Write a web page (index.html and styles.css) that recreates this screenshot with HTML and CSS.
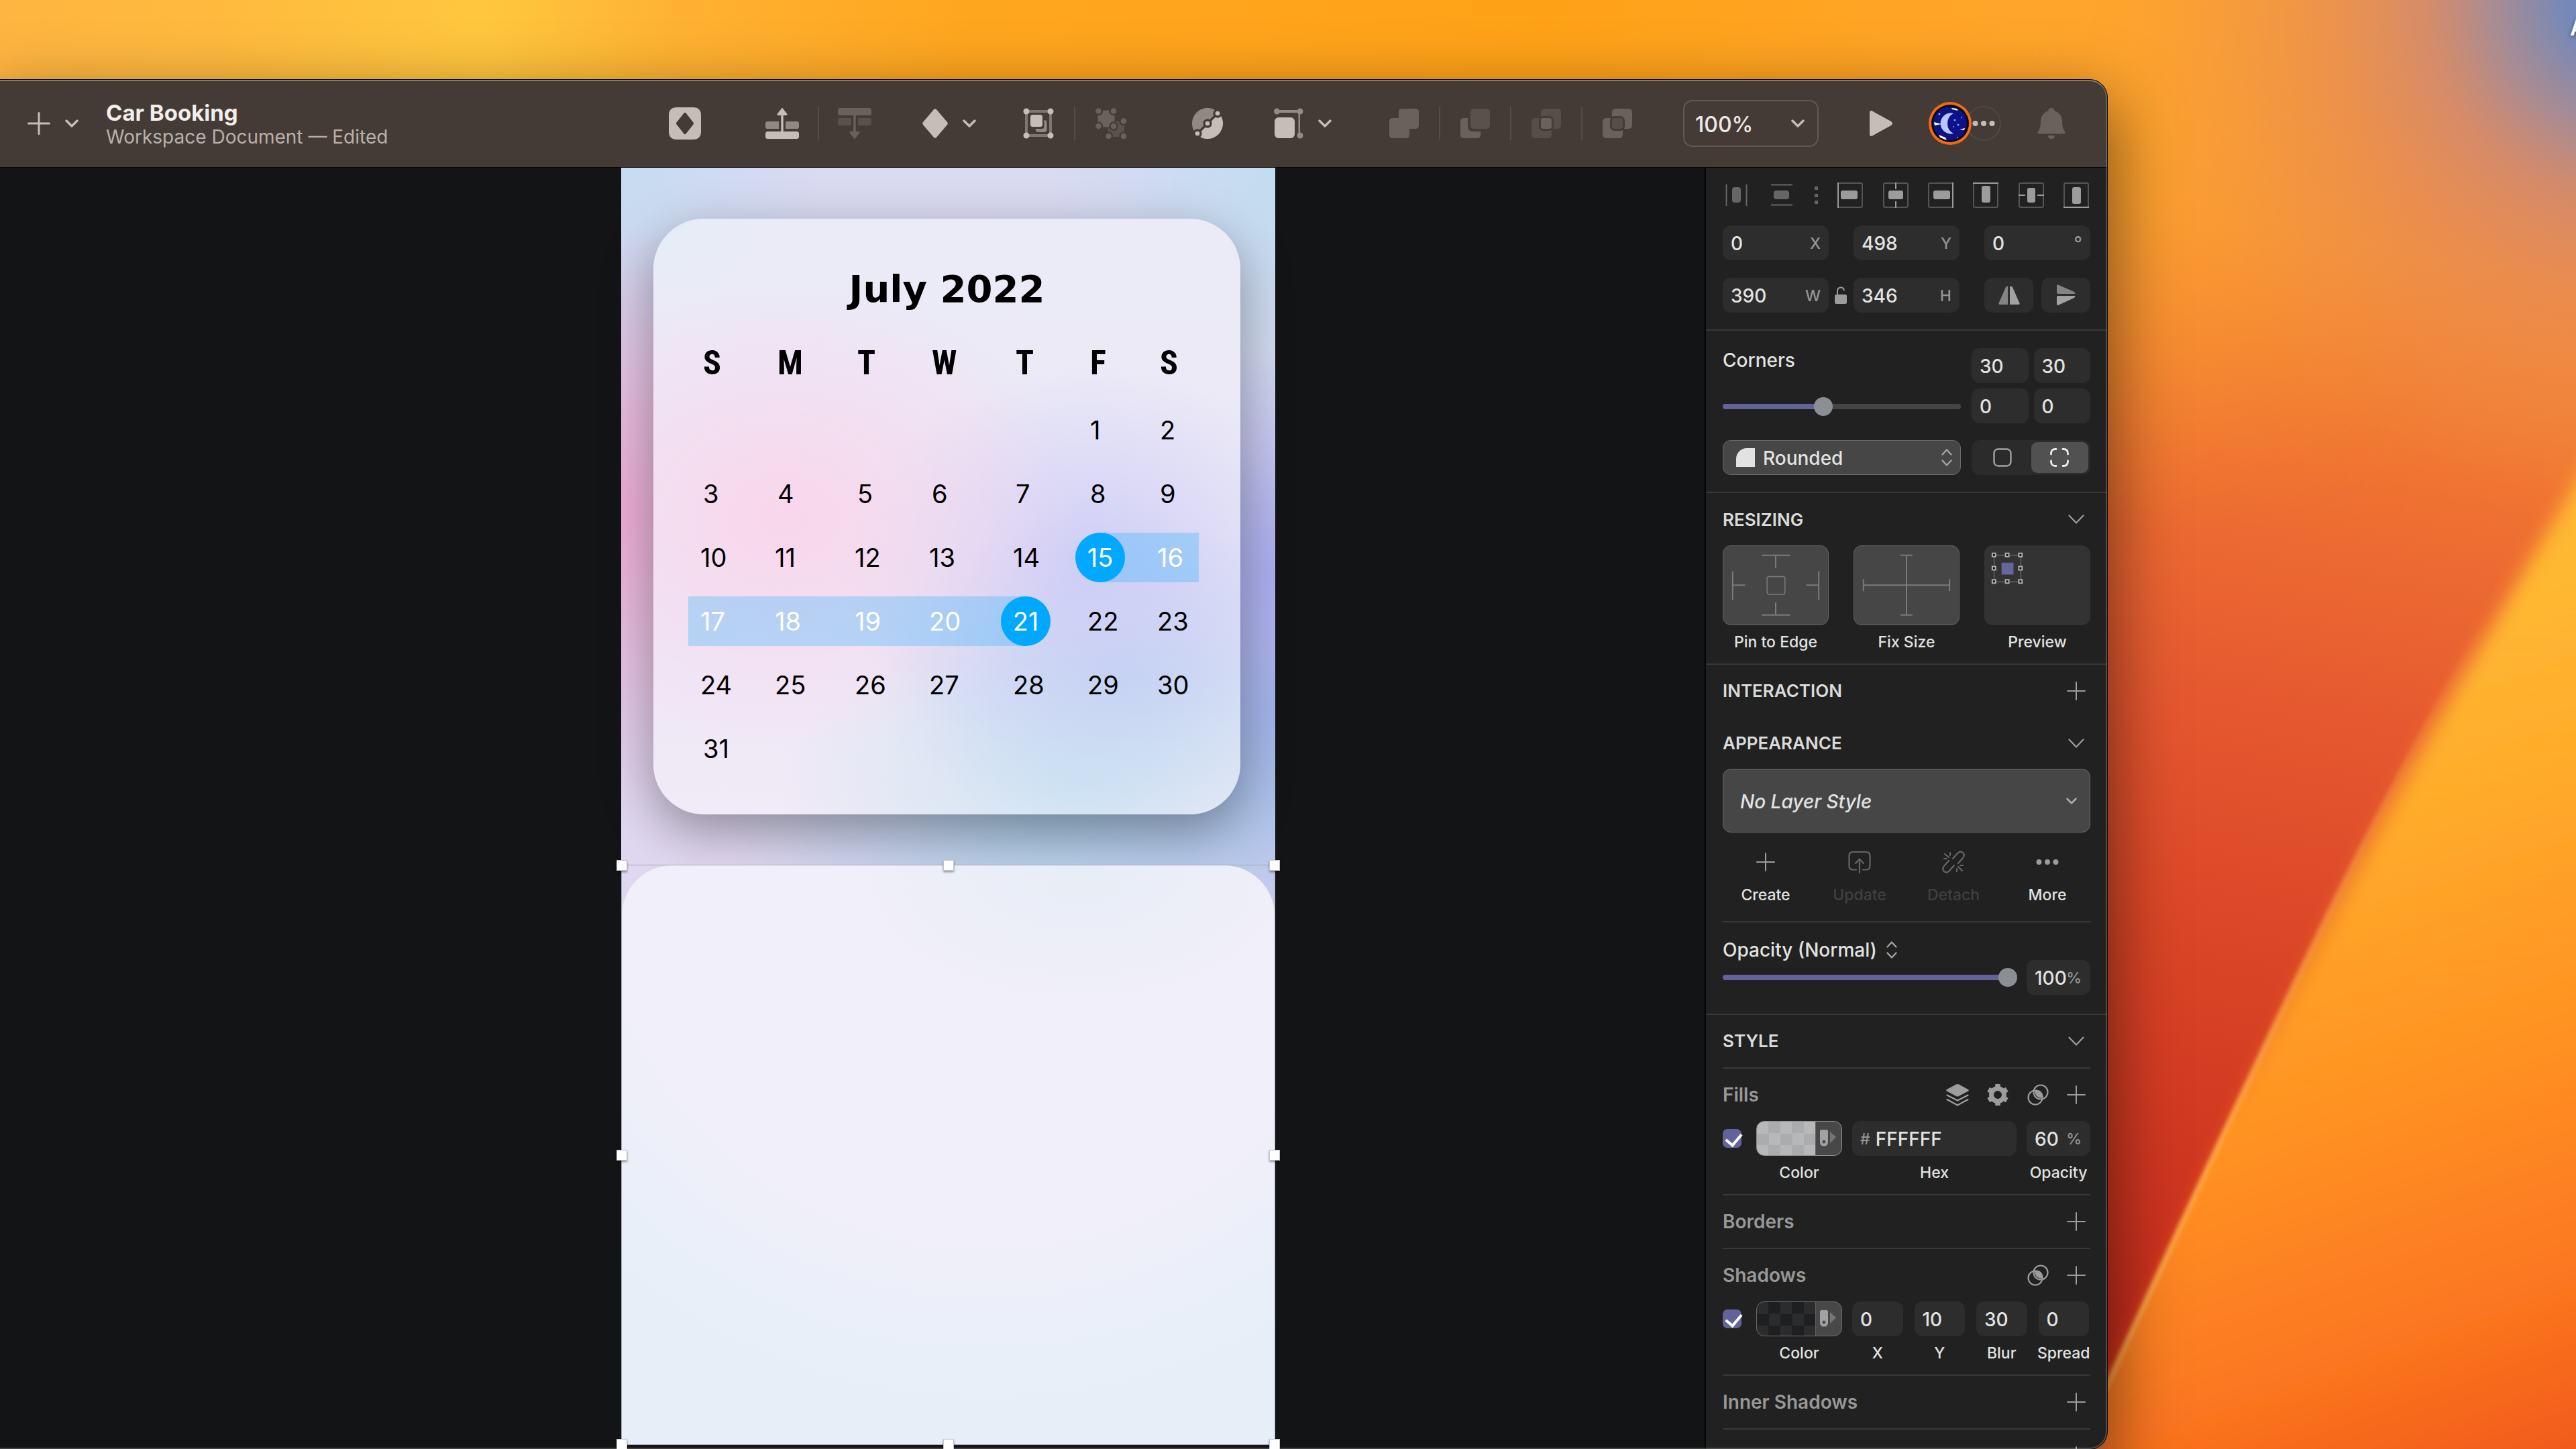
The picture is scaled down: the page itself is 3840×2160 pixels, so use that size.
FILE: index.html
```html
<!DOCTYPE html>
<html lang="en">
<head>
    <meta charset="UTF-8">
    <meta name="viewport" content="width=device-width, initial-scale=1.0">
    <title>Car Booking</title>
    <link rel="stylesheet" href="styles.css">
</head>
<body>
    <!-- icon sprite -->
    <svg class="sprite" aria-hidden="true">
        <symbol id="plus" viewBox="0 0 28 28"><path d="M14 1v26M1 14h26" fill="none" stroke="currentColor" stroke-width="2" stroke-linecap="round"/></symbol>
        <symbol id="add" viewBox="0 0 34 34"><path d="M17 1.500v31M1.500 17h31" fill="none" stroke="currentColor" stroke-width="3" stroke-linecap="round"/></symbol>
        <symbol id="chev" viewBox="0 0 20 12"><path d="M2 2l8 8 8-8" fill="none" stroke="currentColor" stroke-width="3.400" stroke-linecap="round" stroke-linejoin="round"/></symbol>
        <symbol id="chev-thin" viewBox="0 0 24 14"><path d="M1.500 1.500L12 12.500 22.500 1.500" fill="none" stroke="currentColor" stroke-width="2.200" stroke-linecap="round" stroke-linejoin="round"/></symbol>
        <symbol id="updown" viewBox="0 0 16 26"><path d="M1.500 8.500L8 1.500l6.500 7M1.500 17.500l6.500 7 6.500-7" fill="none" stroke="currentColor" stroke-width="2.200" stroke-linecap="round" stroke-linejoin="round"/></symbol>
        <symbol id="component" viewBox="0 0 48 48"><path fill="currentColor" fill-rule="evenodd" d="M12 0h24q12 0 12 12v24q0 12-12 12H12Q0 48 0 36V12Q0 0 12 0zM22.500 8.500Q24 7 25.500 8.500L36.500 22.500Q37.500 24 36.500 25.500L25.500 39.500Q24 41 22.500 39.500L11.500 25.500Q10.500 24 11.500 22.500z"/></symbol>
        <symbol id="forward" viewBox="0 0 50 46"><g fill="currentColor"><path opacity=".6" d="M3 20h17v11H3q-3 0-3-3v-5q0-3 3-3zM30 20h17q3 0 3 3v5q0 3-3 3H30z"/><rect y="35" width="50" height="11" rx="3.500"/><path d="M25 0q1 0 2 2l5.500 7q.5 2-1.500 2H19q-2 0-1.500-2L23 2q1-2 2-2z"/><path d="M23.300 10h3.400v25h-3.400z"/></g></symbol>
        <symbol id="backward" viewBox="0 0 50 46"><g fill="currentColor"><rect width="50" height="11" rx="3.500"/><path opacity=".6" d="M3 15h17v11H3q-3 0-3-3v-5q0-3 3-3zM30 15h17q3 0 3 3v5q0 3-3 3H30z"/><path d="M23.300 10h3.400v26h-3.400z"/><path d="M25 46q1 0 2-2l5.500-7q.5-2-1.500-2H19q-2 0-1.500 2L23 44q1 2 2 2z"/></g></symbol>
        <symbol id="diamond" viewBox="0 0 38 44"><path fill="currentColor" d="M17 1.200q2-2 4 0L37 20q1.500 2 0 4L21 42.800q-2 2-4 0L1 24q-1.500-2 0-4z"/></symbol>
        <symbol id="group" viewBox="0 0 46 46"><path d="M5 5h36v36H5z" fill="none" stroke="currentColor" stroke-width="4" opacity=".45"/><g fill="currentColor"><rect x="11" y="10" width="18" height="18" rx="3.500"/><path opacity=".6" d="M31.500 18H32q3.500 0 3.500 3.500V32q0 4-4 4H22q-3 0-3.500-5H28q3.500 0 3.500-3.500z"/><circle cx="5" cy="5" r="4.500"/><circle cx="41" cy="5" r="4.500"/><circle cx="5" cy="41" r="4.500"/><circle cx="41" cy="41" r="4.500"/></g></symbol>
        <symbol id="ungroup" viewBox="0 0 46 46"><g fill="currentColor"><path opacity=".6" d="M30 20h13v23H19V30h8q3 0 3-3z"/><path d="M3.500 3.500h25v25h-25z"/><g class="ring" stroke-width="2.400"><circle cx="4.500" cy="4.500" r="5.500"/><circle cx="27" cy="4.500" r="5.500"/><circle cx="4.500" cy="27" r="5.500"/><circle cx="27" cy="27" r="5.500"/><circle cx="42" cy="19.500" r="5.500"/><circle cx="19.500" cy="42" r="5.500"/><circle cx="42" cy="42" r="5.500"/></g></g></symbol>
        <symbol id="mask" viewBox="0 0 46 46"><path fill="currentColor" opacity=".6" d="M39.300 6.700A23 23 0 1 0 6.700 39.300z"/><path fill="currentColor" d="M39.300 6.700A23 23 0 0 1 6.700 39.300z"/><g class="ring" fill="currentColor" stroke-width="3.400"><path d="M8 38L38 8"/><circle cx="8" cy="38" r="5"/><circle cx="38" cy="8" r="5"/><circle cx="23" cy="23" r="5"/></g></symbol>
        <symbol id="frame" viewBox="0 0 44 46"><g opacity=".62" fill="currentColor"><path d="M5 3h34v36h-2.500V7H5z"/><circle cx="4.500" cy="5" r="4.500"/><circle cx="39" cy="5" r="4.500"/><circle cx="39" cy="41" r="4.500"/></g><rect x="1" y="14" width="30" height="31" rx="6" fill="currentColor"/></symbol>
        <symbol id="union" viewBox="0 0 44 44"><path fill="currentColor" d="M19 0h20q5 0 5 5v20q0 5-5 5h-9v9q0 5-5 5H5q-5 0-5-5V19q0-5 5-5h9V5q0-5 5-5z"/></symbol>
        <symbol id="subtract" viewBox="0 0 44 44"><rect x="15" width="29" height="30" rx="5" fill="currentColor" opacity=".6"/><path fill="currentColor" d="M5 14h6v12q0 8 8 8h11v5q0 5-5 5H5q-5 0-5-5V19q0-5 5-5z"/></symbol>
        <symbol id="intersect" viewBox="0 0 44 44"><rect x="14" width="30" height="30" rx="5" fill="currentColor" opacity=".5"/><rect y="14" width="30" height="30" rx="5" fill="currentColor" opacity=".5"/><rect class="knot" x="12.500" y="12.500" width="19" height="19" rx="5" stroke-width="3"/><rect x="14" y="14" width="16" height="16" rx="4" fill="currentColor"/></symbol>
        <symbol id="difference" viewBox="0 0 44 44"><rect x="14" width="30" height="30" rx="5" fill="currentColor"/><rect y="14" width="30" height="30" rx="5" fill="currentColor"/><rect class="knot filled" x="12.500" y="12.500" width="19" height="19" rx="5" stroke-width="3"/><rect x="14" y="14" width="16" height="16" rx="4" fill="currentColor" opacity=".5"/></symbol>
        <symbol id="play" viewBox="0 0 34 38"><path fill="currentColor" d="M0 3Q0-1 4 .5L32 16q4 3 0 6L4 37.500Q0 39 0 35z"/></symbol>
        <symbol id="bell" viewBox="0 0 42 46"><g fill="currentColor"><path d="M21 0q4 0 5 4.500Q37 8 37 21q0 9 4 14 2 3.500-2 3.500H3Q-1 38.500 1 35q4-5 4-14Q5 8 16 4.500 17 0 21 0z"/><path d="M16 41h10q0 5-5 5t-5-5z"/></g></symbol>
        <symbol id="dist-h" viewBox="0 0 38 38"><path d="M3.500 3v32M33.500 3v32" stroke="currentColor" stroke-width="2"/><rect x="12" y="7" width="13" height="23" rx="4" fill="currentColor"/></symbol>
        <symbol id="dist-v" viewBox="0 0 38 38"><path d="M3 3.500h32M3 33.500h32" stroke="currentColor" stroke-width="2"/><rect x="7" y="12" width="23" height="13" rx="4" fill="currentColor"/></symbol>
        <symbol id="align-l" viewBox="0 0 38 38"><rect class="dim" x="1" y="1" width="36" height="36" rx="2"/><path d="M1 0v38" stroke="currentColor" stroke-width="2"/><rect x="5" y="12" width="25" height="13" rx="3" fill="currentColor"/></symbol>
        <symbol id="align-c" viewBox="0 0 38 38"><rect class="dim" x="1" y="1" width="36" height="36" rx="2"/><path d="M19 0v10M19 28v10" stroke="currentColor" stroke-width="2"/><rect x="8" y="12" width="22" height="13" rx="3" fill="currentColor"/></symbol>
        <symbol id="align-r" viewBox="0 0 38 38"><rect class="dim" x="1" y="1" width="36" height="36" rx="2"/><path d="M37 0v38" stroke="currentColor" stroke-width="2"/><rect x="8" y="12" width="25" height="13" rx="3" fill="currentColor"/></symbol>
        <symbol id="align-t" viewBox="0 0 38 38"><rect class="dim" x="1" y="1" width="36" height="36" rx="2"/><path d="M0 1h38" stroke="currentColor" stroke-width="2"/><rect x="13" y="5" width="13" height="25" rx="3" fill="currentColor"/></symbol>
        <symbol id="align-m" viewBox="0 0 38 38"><rect class="dim" x="1" y="1" width="36" height="36" rx="2"/><path d="M0 19h10M28 19h10" stroke="currentColor" stroke-width="2"/><rect x="13" y="8" width="12" height="22" rx="3" fill="currentColor"/></symbol>
        <symbol id="align-b" viewBox="0 0 38 38"><rect class="dim" x="1" y="1" width="36" height="36" rx="2"/><path d="M0 37h38" stroke="currentColor" stroke-width="2"/><rect x="13" y="7" width="13" height="25" rx="3" fill="currentColor"/></symbol>
        <symbol id="lock" viewBox="0 0 18 26"><rect y="12" width="18" height="14" rx="2.500" fill="currentColor"/><path d="M4 13V7q0-5.500 5-5.500 4.500 0 5 5" fill="none" stroke="currentColor" stroke-width="2"/></symbol>
        <symbol id="flip-h" viewBox="0 0 32 28"><path fill="currentColor" opacity=".75" d="M14 2v26H2q-2 0-1.500-2L11 2q3-3 3 0z"/><path fill="currentColor" d="M17 2v26h13q2 0 1.500-2L21 2q-4-3-4 0z"/></symbol>
        <symbol id="flip-v" viewBox="0 0 28 32"><path fill="currentColor" opacity=".75" d="M2 14h24q3 0 0-3L2 .5Q0 0 0 2v10q0 2 2 2z"/><path fill="currentColor" d="M2 17h24q3 0 0 3L2 31q-2 .5-2-1.500V19q0-2 2-2z"/></symbol>
        <symbol id="box" viewBox="0 0 28 28"><rect x="1.500" y="1.500" width="25" height="25" rx="6" fill="none" stroke="currentColor" stroke-width="2.400"/></symbol>
        <symbol id="corners" viewBox="0 0 28 28"><path d="M1.500 9V8Q1.500 1.500 8 1.500h1M19 1.500h1q6.500 0 6.500 6.500v1M26.500 19v1q0 6.500-6.500 6.500h-1M9 26.500H8Q1.500 26.500 1.500 20v-1" fill="none" stroke="currentColor" stroke-width="2.800" stroke-linecap="round"/></symbol>
        <symbol id="pin" viewBox="0 0 158 118"><g fill="none" stroke="currentColor" stroke-width="2"><path d="M58 14h43M79 14v19M58 104h43M79 104V85M14 38v43M14 59h19M144 38v43M144 59h-19"/><rect x="66" y="46" width="27" height="27" rx="3" stroke-width="1.500"/></g></symbol>
        <symbol id="fix" viewBox="0 0 158 118"><path d="M70 14h18M70 104h18M79 14v90M14 50v18M144 50v18M14 59h130" fill="none" stroke="currentColor" stroke-width="2"/></symbol>
        <symbol id="handles" viewBox="0 0 158 118"><path d="M14 14h40v40H14z" fill="none" stroke="#555" stroke-width="2"/><path fill="#65669e" d="M25 25h18v18H25z"/><path fill="#111" stroke="#b0b0b0" stroke-width="2" d="M11 11h5v5h-5zM31 11h5v5h-5zM51 11h5v5h-5zM11 31h5v5h-5zM51 31h5v5h-5zM11 51h5v5h-5zM31 51h5v5h-5zM51 51h5v5h-5z"/></symbol>
        <symbol id="update" viewBox="0 0 34 34"><path d="M12 28.500H7.500q-6 0-6-6V8q0-6 6-6h19q6 0 6 6v14.500q0 6-6 6H22M17 33V13M11 19l6-6.500 6 6.500" fill="none" stroke="currentColor" stroke-width="2.200" stroke-linecap="round"/></symbol>
        <symbol id="detach" viewBox="0 0 34 34"><g fill="none" stroke="currentColor" stroke-width="2.200" stroke-linecap="round"><path d="M16 12l7.500-8.500q4-3.500 7.500-.5 3.500 4 0 8L24 19M18 22l-7.500 8.500q-4 3.500-7.500.5-3.500-4 0-8L10 15M10 10L4 5M12 7V3M6.500 12H3M24 24l6 6M22 27v4M27.500 22H31"/></g></symbol>
        <symbol id="dots" viewBox="0 0 34 34"><g fill="currentColor"><circle cx="4.500" cy="17" r="4"/><circle cx="17" cy="17" r="4"/><circle cx="29.500" cy="17" r="4"/></g></symbol>
        <symbol id="layers" viewBox="0 0 34 34"><path fill="currentColor" d="M15 1.500q2-1 4 0L33 9q1.500 1 0 2.500L19 19q-2 1-4 0L1 11.500Q-.5 10 1 9z"/><path d="M1.500 17.500L17 25.500l15.500-8M1.500 24L17 32.500 32.500 24" fill="none" stroke="currentColor" stroke-width="2.200" stroke-linecap="round"/></symbol>
        <symbol id="gear" viewBox="0 0 34 34"><circle cx="17" cy="17" r="9.500" fill="none" stroke="currentColor" stroke-width="7"/><path d="M17 1v7M17 26v7M3.200 9l6 3.500M24.800 21.500l6 3.500M3.200 25l6-3.500M24.800 12.500l6-3.500" stroke="currentColor" stroke-width="7.500"/></symbol>
        <symbol id="blend" viewBox="0 0 34 34"><g fill="none" stroke="currentColor" stroke-width="2.200"><circle cx="21" cy="13" r="10.500"/><circle cx="13" cy="21" r="10.500"/></g><path fill="currentColor" d="M12.500 10A9.500 9.500 0 0 1 24 21.500 9.500 9.500 0 0 1 12.500 10z"/></symbol>
        <symbol id="swatch" viewBox="0 0 24 26"><path fill="currentColor" fill-rule="evenodd" d="M2.500 0h7Q12 0 12 2.500v16q0 6-6 6t-6-6v-16Q0 0 2.500 0zM6 15.500a2.500 2.500 0 1 0 0 5 2.500 2.500 0 0 0 0-5z"/><path fill="currentColor" opacity=".5" d="M15 3l9 8-9 9z"/></symbol>
    </svg>

    <!-- desktop wallpaper -->
    <svg class="wallpaper" viewBox="0 0 3840 2160" preserveAspectRatio="none" aria-hidden="true">
        <defs>
            <linearGradient id="sky" gradientUnits="userSpaceOnUse" x1="3500" y1="0" x2="3160" y2="1950">
                <stop offset="0" stop-color="#fba339"/><stop offset=".18" stop-color="#f79538"/><stop offset=".36" stop-color="#ef7132"/><stop offset=".53" stop-color="#e65930"/><stop offset=".72" stop-color="#da4526"/><stop offset="1" stop-color="#c92d1d"/>
            </linearGradient>
            <linearGradient id="strip" gradientUnits="userSpaceOnUse" x1="0" x2="3600" y1="0" y2="0">
                <stop offset="0" stop-color="#ffb541"/><stop offset=".09" stop-color="#ffba3e"/><stop offset=".2" stop-color="#ffc73e"/><stop offset=".28" stop-color="#ffb232"/><stop offset=".4" stop-color="#ffa61f"/><stop offset=".64" stop-color="#ffa218"/><stop offset=".84" stop-color="#ffa52a"/><stop offset="1" stop-color="#ffa52a" stop-opacity="0"/>
            </linearGradient>
            <linearGradient id="down" x1="0" y1="0" x2="0" y2="1">
                <stop offset="0" stop-color="#fff"/><stop offset=".25" stop-color="#fff"/><stop offset="1" stop-color="#000"/>
            </linearGradient>
            <mask id="top" maskUnits="userSpaceOnUse" x="0" y="0" width="3840" height="800"><path fill="url(#down)" d="M0 0h3840v800H0z"/></mask>
            <radialGradient id="blue" gradientUnits="userSpaceOnUse" cx="3930" cy="-10" r="760">
                <stop offset="0" stop-color="#5a86c8"/><stop offset=".14" stop-color="#7489b9"/><stop offset=".28" stop-color="#a18a9b" stop-opacity=".92"/><stop offset=".42" stop-color="#cb8578" stop-opacity=".75"/><stop offset=".62" stop-color="#e0855f" stop-opacity=".5"/><stop offset="1" stop-color="#ee8f4a" stop-opacity="0"/>
            </radialGradient>
            <linearGradient id="petal" gradientUnits="userSpaceOnUse" x1="3440" y1="1000" x2="3860" y2="2180">
                <stop offset="0" stop-color="#ffb833"/><stop offset=".2" stop-color="#ffac2b"/><stop offset=".5" stop-color="#ff9223"/><stop offset=".78" stop-color="#fc7720"/><stop offset="1" stop-color="#f0581b"/>
            </linearGradient>
            <linearGradient id="fade" gradientUnits="userSpaceOnUse" x1="0" y1="900" x2="0" y2="1700">
                <stop offset="0" stop-color="#000"/><stop offset="1" stop-color="#fff"/>
            </linearGradient>
            <mask id="low" maskUnits="userSpaceOnUse" x="3000" y="0" width="900" height="2200"><path fill="url(#fade)" d="M3000 0h900v2200h-900z"/></mask>
            <filter id="soft" filterUnits="userSpaceOnUse" x="2900" y="300" width="1300" height="2200"><feGaussianBlur stdDeviation="14"/></filter>
            <filter id="crisp" filterUnits="userSpaceOnUse" x="2900" y="300" width="1300" height="2200"><feGaussianBlur stdDeviation="3"/></filter>
        </defs>
        <path fill="url(#sky)" d="M0 0h3840v2160H0z"/>
        <path fill="url(#strip)" mask="url(#top)" d="M0 0h3600v800H0z"/>
        <path fill="url(#blue)" d="M2900 0h940v900h-940z"/>
        <path filter="url(#soft)" fill="url(#petal)" d="M3100 2170L3148 2068Q3306 1724 3440 1450T3702 955T3990 470V2300H3040z"/>
        <g mask="url(#low)">
            <path filter="url(#crisp)" fill="url(#petal)" stroke="#ffae4c" stroke-width="6" d="M3095 2170L3142 2062Q3300 1718 3430 1446T3690 950T3980 470V2300H3040z"/>
        </g>
    </svg>
    <div class="desktop-label">A</div>

    <main class="window">
        <header class="toolbar">
            <div class="pair">
                <button class="tool" aria-label="Insert"><svg width="34" height="34"><use href="#add"/></svg></button>
                <button class="tool" aria-label="Insert menu"><svg width="20" height="12"><use href="#chev"/></svg></button>
            </div>
            <div class="doc">
                <h1>Car Booking</h1>
                <p>Workspace Document — Edited</p>
            </div>
            <div class="tools">
                <button class="tool tool-first" aria-label="Create symbol"><svg width="48" height="48"><use href="#component"/></svg></button>
                <div class="split">
                    <button class="tool" aria-label="Forward"><svg width="50" height="46"><use href="#forward"/></svg></button>
                    <button class="tool off" aria-label="Backward"><svg width="50" height="46"><use href="#backward"/></svg></button>
                </div>
                <div class="pair">
                    <button class="tool" aria-label="Shape"><svg width="38" height="44"><use href="#diamond"/></svg></button>
                    <button class="tool" aria-label="Shape menu"><svg width="20" height="12"><use href="#chev"/></svg></button>
                </div>
                <div class="split split-group">
                    <button class="tool" aria-label="Group"><svg width="46" height="46"><use href="#group"/></svg></button>
                    <button class="tool off" aria-label="Ungroup"><svg class="open" width="46" height="46"><use href="#ungroup"/></svg></button>
                </div>
                <button class="tool tool-mask" aria-label="Mask"><svg class="open" width="46" height="46"><use href="#mask"/></svg></button>
                <div class="pair">
                    <button class="tool" aria-label="Resize"><svg width="44" height="46"><use href="#frame"/></svg></button>
                    <button class="tool" aria-label="Resize menu"><svg width="20" height="12"><use href="#chev"/></svg></button>
                </div>
                <div class="split split-bool">
                    <button class="tool off" aria-label="Union"><svg width="44" height="44"><use href="#union"/></svg></button>
                    <button class="tool off" aria-label="Subtract"><svg width="44" height="44"><use href="#subtract"/></svg></button>
                    <button class="tool off" aria-label="Intersect"><svg width="44" height="44"><use href="#intersect"/></svg></button>
                    <button class="tool off" aria-label="Difference"><svg width="44" height="44"><use href="#difference"/></svg></button>
                </div>
                <div class="zoom">
                    <select aria-label="Zoom"><option>100%</option></select>
                    <svg width="20" height="12"><use href="#chev"/></svg>
                </div>
                <div class="account">
                    <button class="tool" aria-label="Preview"><svg width="34" height="38"><use href="#play"/></svg></button>
                    <div class="people">
                        <svg class="avatar" width="64" height="64" viewBox="0 0 64 64" aria-hidden="true">
                            <circle cx="32" cy="32" r="32" fill="#f26a14"/><circle cx="32" cy="32" r="28" fill="#080812"/><circle cx="32" cy="32" r="25" fill="#0c1287"/>
                            <path fill="#b8c8ff" d="M37 17a15.500 15.500 0 1 0 0 30 17 17 0 0 1 0-30z"/>
                            <path fill="#fff" d="M34 9l8 1 2 3-9-2zM8 30l11 3-10 2zM46 41l8-2-1 3zM15 49l10 4 2 4-10-4z"/>
                            <g fill="#8ea6ff"><circle cx="39" cy="27" r="1.500"/><circle cx="44" cy="34" r="1.500"/><circle cx="49" cy="23" r="1"/><circle cx="16" cy="18" r="1.500"/><circle cx="37" cy="37" r="1"/><circle cx="43" cy="53" r="1"/></g>
                        </svg>
                        <button class="more" aria-label="More people"><svg width="34" height="34"><use href="#dots"/></svg></button>
                    </div>
                    <button class="tool off" aria-label="Notifications"><svg width="42" height="46"><use href="#bell"/></svg></button>
                </div>
            </div>
        </header>

        <div class="workspace">
            <section class="canvas">
                <div class="artboard">
                    <div class="calendar">
                        <h2>July 2022</h2>
                        <table>
                            <colgroup><col class="c1"><col class="c2"><col class="c1"><col class="c3"><col class="c1"><col class="c4"><col class="c5"></colgroup>
                            <thead>
                                <tr><th>S</th><th>M</th><th>T</th><th>W</th><th>T</th><th>F</th><th>S</th></tr>
                            </thead>
                            <tbody>
                                <tr><td></td><td></td><td></td><td></td><td></td><td><span class="one">1</span></td><td><span class="one">2</span></td></tr>
                                <tr><td><span class="one">3</span></td><td><span class="one">4</span></td><td><span class="one">5</span></td><td><span class="one">6</span></td><td><span class="one">7</span></td><td><span class="one">8</span></td><td><span class="one">9</span></td></tr>
                                <tr><td><span>10</span></td><td><span>11</span></td><td><span>12</span></td><td><span>13</span></td><td><span>14</span></td><td><span class="from"><b>15</b></span></td><td><span class="in">16</span></td></tr>
                                <tr><td><span class="in">17</span></td><td><span class="in">18</span></td><td><span class="in">19</span></td><td><span class="in">20</span></td><td><span class="to"><b>21</b></span></td><td><span>22</span></td><td><span>23</span></td></tr>
                                <tr><td><span>24</span></td><td><span>25</span></td><td><span>26</span></td><td><span>27</span></td><td><span>28</span></td><td><span>29</span></td><td><span>30</span></td></tr>
                                <tr><td><span class="one">31</span></td><td></td><td></td><td></td><td></td><td></td><td></td></tr>
                            </tbody>
                        </table>
                    </div>
                    <div class="sheet">
                        <div class="sheet-fill"></div>
                        <i class="handle tl"></i><i class="handle tc"></i><i class="handle tr"></i>
                        <i class="handle ml"></i><i class="handle mr"></i>
                        <i class="handle bl"></i><i class="handle bc"></i><i class="handle br"></i>
                    </div>
                </div>
            </section>

            <aside class="inspector">
                <section class="block geometry">
                    <div class="aligns">
                        <button class="icon dark" aria-label="Distribute horizontally"><svg width="38" height="38"><use href="#dist-h"/></svg></button>
                        <button class="icon dark" aria-label="Distribute vertically"><svg width="38" height="38"><use href="#dist-v"/></svg></button>
                        <span class="grip"></span>
                        <button class="icon" aria-label="Align left"><svg width="38" height="38"><use href="#align-l"/></svg></button>
                        <button class="icon" aria-label="Align center"><svg width="38" height="38"><use href="#align-c"/></svg></button>
                        <button class="icon" aria-label="Align right"><svg width="38" height="38"><use href="#align-r"/></svg></button>
                        <button class="icon" aria-label="Align top"><svg width="38" height="38"><use href="#align-t"/></svg></button>
                        <button class="icon" aria-label="Align middle"><svg width="38" height="38"><use href="#align-m"/></svg></button>
                        <button class="icon" aria-label="Align bottom"><svg width="38" height="38"><use href="#align-b"/></svg></button>
                    </div>
                    <div class="cols">
                        <label class="field"><input type="text" value="0"><span>X</span></label>
                        <label class="field"><input type="text" value="498"><span>Y</span></label>
                        <label class="field"><input type="text" value="0" aria-label="Rotation"><span class="degree">°</span></label>
                    </div>
                    <div class="cols">
                        <label class="field"><input type="text" value="390"><span>W</span></label>
                        <div class="locked">
                            <button class="icon lock" aria-label="Lock proportions"><svg width="18" height="26"><use href="#lock"/></svg></button>
                            <label class="field"><input type="text" value="346"><span>H</span></label>
                        </div>
                        <div class="flips">
                            <button class="flip" aria-label="Flip horizontally"><svg width="32" height="28"><use href="#flip-h"/></svg></button>
                            <button class="flip" aria-label="Flip vertically"><svg width="28" height="32"><use href="#flip-v"/></svg></button>
                        </div>
                    </div>
                </section>

                <section class="block corners">
                    <div class="slide">
                        <label for="radius">Corners</label>
                        <input id="radius" type="range" min="0" max="72" value="30" style="--fill: 42%">
                    </div>
                    <div class="quad">
                        <input class="field" type="text" value="30" aria-label="Top left">
                        <input class="field" type="text" value="30" aria-label="Top right">
                        <input class="field" type="text" value="0" aria-label="Bottom left">
                        <input class="field" type="text" value="0" aria-label="Bottom right">
                    </div>
                    <div class="kind">
                        <i class="quarter"></i>
                        <select aria-label="Corner type"><option>Rounded</option></select>
                        <svg width="16" height="26"><use href="#updown"/></svg>
                    </div>
                    <div class="segment">
                        <button aria-label="All corners"><svg width="28" height="28"><use href="#box"/></svg></button>
                        <button class="on" aria-label="Separate corners"><svg width="28" height="28"><use href="#corners"/></svg></button>
                    </div>
                </section>

                <section class="block resizing">
                    <div class="head"><h3>RESIZING</h3><button class="icon" aria-label="Collapse"><svg width="24" height="14"><use href="#chev-thin"/></svg></button></div>
                    <div class="cols">
                        <button class="resize"><svg viewBox="0 0 158 118"><use href="#pin"/></svg><span>Pin to Edge</span></button>
                        <button class="resize"><svg viewBox="0 0 158 118"><use href="#fix"/></svg><span>Fix Size</span></button>
                        <button class="resize plain"><svg viewBox="0 0 158 118"><use href="#handles"/></svg><span>Preview</span></button>
                    </div>
                </section>

                <section class="block appearance">
                    <div class="head"><h3>INTERACTION</h3><button class="icon" aria-label="Add interaction"><svg width="28" height="28"><use href="#plus"/></svg></button></div>
                    <div class="head"><h3>APPEARANCE</h3><button class="icon" aria-label="Collapse"><svg width="24" height="14"><use href="#chev-thin"/></svg></button></div>
                    <div class="layer-style">
                        <select aria-label="Layer style"><option>No Layer Style</option></select>
                        <svg width="16" height="10"><use href="#chev"/></svg>
                    </div>
                    <div class="actions">
                        <button><svg width="28" height="34"><use href="#plus"/></svg>Create</button>
                        <button disabled><svg width="34" height="34"><use href="#update"/></svg>Update</button>
                        <button disabled><svg width="34" height="34"><use href="#detach"/></svg>Detach</button>
                        <button><svg width="34" height="34"><use href="#dots"/></svg>More</button>
                    </div>
                    <div class="opacity">
                        <div class="slide">
                            <label for="opacity">Opacity (Normal)<svg width="16" height="30"><use href="#updown"/></svg></label>
                            <input id="opacity" type="range" min="0" max="100" value="100" style="--fill: 98%">
                        </div>
                        <label class="field percent"><input type="text" value="100" aria-label="Opacity"><span>%</span></label>
                    </div>
                </section>

                <section class="style">
                    <div class="row"><div class="head"><h3>STYLE</h3><button class="icon" aria-label="Collapse"><svg width="24" height="14"><use href="#chev-thin"/></svg></button></div></div>
                    <div class="row">
                        <div class="head">
                            <h4>Fills</h4>
                            <button class="icon" aria-label="Fill layers"><svg width="34" height="34"><use href="#layers"/></svg></button>
                            <button class="icon" aria-label="Fill settings"><svg width="34" height="34"><use href="#gear"/></svg></button>
                            <button class="icon" aria-label="Fill blending"><svg width="34" height="34"><use href="#blend"/></svg></button>
                            <button class="icon" aria-label="Add fill"><svg width="28" height="28"><use href="#plus"/></svg></button>
                        </div>
                        <div class="paint">
                            <input type="checkbox" checked aria-label="Fill enabled">
                            <div class="item color"><button class="well light" id="fill-color" aria-label="Fill color"><svg width="24" height="26"><use href="#swatch"/></svg></button><label for="fill-color">Color</label></div>
                            <div class="item hex"><div class="field"><span>#</span><input id="hex" type="text" value="FFFFFF"></div><label for="hex">Hex</label></div>
                            <div class="item alpha"><div class="field percent"><input id="alpha" type="text" value="60"><span>%</span></div><label for="alpha">Opacity</label></div>
                        </div>
                    </div>
                    <div class="row"><div class="head"><h4>Borders</h4><button class="icon" aria-label="Add border"><svg width="28" height="28"><use href="#plus"/></svg></button></div></div>
                    <div class="row">
                        <div class="head">
                            <h4>Shadows</h4>
                            <button class="icon" aria-label="Shadow blending"><svg width="34" height="34"><use href="#blend"/></svg></button>
                            <button class="icon" aria-label="Add shadow"><svg width="28" height="28"><use href="#plus"/></svg></button>
                        </div>
                        <div class="paint">
                            <input type="checkbox" checked aria-label="Shadow enabled">
                            <div class="item color"><button class="well black" id="shadow-color" aria-label="Shadow color"><svg width="24" height="26"><use href="#swatch"/></svg></button><label for="shadow-color">Color</label></div>
                            <div class="offsets">
                                <div class="item"><input class="field" id="sx" type="text" value="0"><label for="sx">X</label></div>
                                <div class="item"><input class="field" id="sy" type="text" value="10"><label for="sy">Y</label></div>
                                <div class="item"><input class="field" id="sb" type="text" value="30"><label for="sb">Blur</label></div>
                                <div class="item"><input class="field" id="ss" type="text" value="0"><label for="ss">Spread</label></div>
                            </div>
                        </div>
                    </div>
                    <div class="row"><div class="head"><h4>Inner Shadows</h4><button class="icon" aria-label="Add inner shadow"><svg width="28" height="28"><use href="#plus"/></svg></button></div></div>
                    <div class="row"><div class="head end"><button class="icon" aria-label="Add blur"><svg width="28" height="28"><use href="#plus"/></svg></button></div></div>
                </section>
            </aside>
        </div>
    </main>
</body>
</html>
```

FILE: styles.css
```css
* {
    box-sizing: border-box;
}
body {
    display: flex;
    flex-direction: column;
    height: 100vh;
    margin: 0;
    overflow: hidden;
    font-family: Inter, "Liberation Sans", sans-serif;
    font-size: 28px;
    color: #e2e2e2;
    background: #f7962e;
}
h1, h2, h3, h4, p {
    margin: 0;
}
button, input, select {
    margin: 0;
    padding: 0;
    border: 0;
    background: none;
    color: inherit;
    font: inherit;
    appearance: none;
}
svg {
    display: block;
    flex: none;
}
.sprite {
    position: absolute;
    width: 0;
    height: 0;
}
.wallpaper {
    position: absolute;
    inset: 0;
    z-index: -1;
    width: 100%;
    height: 100%;
}
.desktop-label {
    position: absolute;
    top: 22px;
    left: calc(100% - 9px);
    font-size: 32px;
    font-weight: 600;
    line-height: 40px;
    color: #fff;
    text-shadow: 0 2px 6px rgba(0, 0, 0, 0.5);
}

/* window */
.window {
    position: relative;
    display: flex;
    flex: 1;
    flex-direction: column;
    min-height: 0;
    margin: 119px 699px 0 0;
    border-radius: 0 26px 26px 0;
    overflow: hidden;
    background: #212121;
    box-shadow: 0 0 0 1px #100c08, 0 40px 100px 10px rgba(0, 0, 0, 0.5);
}
.window::after {
    content: "";
    position: absolute;
    inset: 0;
    border: 2px solid rgba(255, 255, 255, 0.2);
    border-top-color: rgba(255, 255, 255, 0.34);
    border-left: 0;
    border-radius: inherit;
    pointer-events: none;
}
.toolbar {
    display: flex;
    flex: none;
    align-items: center;
    height: 131px;
    padding: 0 62px 0 41px;
    border-bottom: 1px solid #050505;
    color: #c7bdb8;
    background: #453b36;
}
.tool {
    display: flex;
    align-items: center;
}
.off {
    color: #6a615c;
}
.knot {
    fill: none;
    stroke: #453b36;
}
.filled {
    fill: #453b36;
}
.ring {
    stroke: #453b36;
}
.open {
    overflow: visible;
}
.pair {
    display: flex;
    align-items: center;
    gap: 22px;
}
.doc {
    flex: 1;
    margin-left: 41px;
    padding-top: 2px;
    white-space: nowrap;
}
.doc h1 {
    font-size: 33px;
    font-weight: 700;
    line-height: 38px;
    color: #f1eeec;
}
.doc p {
    font-size: 28px;
    line-height: 34px;
    color: #b9b0ab;
}
.tools {
    display: flex;
    align-items: center;
    gap: 76px;
}
.tool-first {
    margin-right: 20px;
}
.tool-mask {
    margin-left: 22px;
}
.split {
    display: flex;
    align-items: center;
}
.split .tool + .tool::before {
    content: "";
    width: 2px;
    height: 50px;
    margin: 0 28px;
    background: #574d48;
}
.split-group {
    margin-left: -6px;
}
.split-group .tool + .tool::before {
    margin: 0 30px;
}
.split-bool {
    margin-left: 10px;
}
.split-bool .tool + .tool::before {
    margin: 0 30px;
}
.zoom {
    position: relative;
}
.zoom select {
    width: 202px;
    height: 70px;
    padding: 2px 16px 0;
    border: 2px solid #625954;
    border-radius: 14px;
    font-size: 32px;
    font-weight: 500;
    color: #ece9e7;
}
.zoom svg {
    position: absolute;
    top: 29px;
    right: 21px;
    pointer-events: none;
}
.account {
    display: flex;
    align-items: center;
    gap: 54px;
}
.people {
    display: flex;
    align-items: center;
}
.avatar {
    position: relative;
    z-index: 1;
}
.more {
    display: grid;
    place-items: center;
    width: 52px;
    height: 52px;
    margin-left: -8px;
    border: 2px solid #524843;
    border-radius: 50%;
}
.workspace {
    display: flex;
    flex: 1;
    min-height: 0;
}

/* canvas */
.canvas {
    display: flex;
    flex: 1;
    justify-content: center;
    padding-left: 286px;
    overflow: hidden;
    background: #121415;
}
.artboard {
    display: flex;
    flex: none;
    flex-direction: column;
    align-items: flex-start;
    width: 975px;
    height: 1904px;
    padding-top: 76px;
    background:
        radial-gradient(ellipse 300px 430px at 0 27%, #edabd4, rgba(233, 176, 214, 0)),
        radial-gradient(ellipse 360px 340px at 100% 32%, #acaeee, rgba(170, 174, 236, 0)),
        radial-gradient(ellipse 400px 380px at 102% 42%, #97b6e6, rgba(150, 180, 230, 0)),
        radial-gradient(ellipse 480px 260px at 66% 51%, #a9cbe6, rgba(176, 206, 232, 0)),
        radial-gradient(ellipse 300px 360px at 0 0, #c6dbf1, rgba(200, 220, 241, 0)),
        radial-gradient(ellipse 340px 400px at 100% 2%, #c3dcf0, rgba(200, 220, 241, 0)),
        linear-gradient(#dadaf1, #d9d6ee 25%, #e0d7f0 50%);
}
.calendar {
    flex: none;
    width: 875px;
    height: 888px;
    margin-left: 48px;
    padding: 63px 52px 0;
    border-radius: 75px;
    color: #000;
    background:
        radial-gradient(ellipse 440px 350px at 22% 50%, #f9d6ec, rgba(248, 215, 236, 0)),
        radial-gradient(ellipse 370px 290px at 74% 58%, rgba(205, 204, 246, 0.95), rgba(210, 208, 245, 0)),
        radial-gradient(ellipse 380px 230px at 80% 76%, #c2d6f2, rgba(197, 216, 242, 0)),
        radial-gradient(ellipse 440px 240px at 72% 94%, #cfe4f2, rgba(207, 225, 242, 0)),
        radial-gradient(ellipse 200px 150px at 0 0, #e5edf7, rgba(230, 238, 248, 0)),
        linear-gradient(#ebebf7, #ece8f6 60%, #f1eaf7);
    box-shadow: 0 25px 75px rgba(0, 0, 0, 0.36);
}
.calendar h2 {
    font-family: "DejaVu Sans", Inter, sans-serif;
    font-size: 56px;
    font-weight: 700;
    line-height: 84px;
    text-align: center;
}
table {
    width: 761px;
    margin-top: 16px;
    border-collapse: collapse;
    table-layout: fixed;
}
.c1 {
    width: 111px;
}
.c2 {
    width: 119px;
}
.c3 {
    width: 125px;
}
.c4 {
    width: 104px;
}
.c5 {
    width: 80px;
}
th {
    height: 104px;
    padding: 0 0 0 22px;
    font-family: "Liberation Sans Narrow", "Roboto Condensed", Roboto, sans-serif;
    font-size: 50px;
    font-weight: 700;
    text-align: left;
}
td {
    height: 95px;
    padding: 0;
    font-size: 38px;
}
td span {
    display: block;
    height: 74px;
    padding-left: 18px;
    line-height: 74px;
}
td .one {
    padding-left: 22px;
}
td .in, td .from, td .to {
    color: #fff;
    background: rgba(0, 168, 255, 0.25);
}
td .from, td .to {
    padding: 0;
}
td .from {
    background: linear-gradient(to right, transparent 37px, rgba(0, 168, 255, 0.25) 37px);
}
td .to {
    background: linear-gradient(to right, rgba(0, 168, 255, 0.25) 37px, transparent 37px);
}
td b {
    display: block;
    width: 74px;
    border-radius: 50%;
    font-weight: 400;
    text-align: center;
    background: #00a8ff;
}
.sheet {
    position: relative;
    flex: none;
    width: 100%;
    height: 865px;
    margin-top: 75px;
    border: 1px solid #a7a5b2;
}
.sheet-fill {
    height: 100%;
    border-radius: 75px 75px 0 0;
    background:
        radial-gradient(ellipse 360px 220px at 70% 0, #e7edf6, rgba(232, 237, 246, 0)),
        radial-gradient(ellipse 820px 760px at 56% 5%, #f1effa 65%, rgba(240, 239, 250, 0)),
        #e6eff8;
}
.handle {
    position: absolute;
    width: 16px;
    height: 16px;
    background: #fff;
    border: 1px solid #c4c4cc;
    box-shadow: 0 2px 3px rgba(0, 0, 0, 0.4);
}
.tl, .tc, .tr {
    top: -8px;
}
.ml, .mr {
    top: calc(50% - 8px);
}
.bl, .bc, .br {
    bottom: -8px;
}
.tl, .ml, .bl {
    left: -8px;
}
.tc, .bc {
    left: calc(50% - 8px);
}
.tr, .mr, .br {
    right: -8px;
}

/* inspector */
.inspector {
    flex: none;
    width: 600px;
    border-left: 2px solid #050505;
    font-weight: 500;
    background: #212121;
}
.block {
    padding: 0 25px;
    border-bottom: 2px solid #383838;
}
.icon {
    display: grid;
    place-items: center;
    color: #9c9c9c;
}
.dark {
    color: #666;
}
.dim {
    fill: none;
    stroke: #555;
    stroke-width: 2px;
}
.field {
    display: flex;
    align-items: center;
    min-width: 0;
    height: 52px;
    padding: 2px 12px 0;
    border-radius: 12px;
    background: #2d2d2d;
}
.field input {
    flex: 1;
    width: 100%;
    min-width: 0;
}
.field span {
    font-size: 23px;
    color: #949494;
}
.field .degree {
    font-size: 28px;
}
.cols {
    display: grid;
    grid-template-columns: repeat(3, 1fr);
    gap: 37px;
}
.geometry {
    display: grid;
    gap: 26px;
    padding-top: 22px;
    padding-bottom: 25px;
}
.aligns {
    display: flex;
    align-items: center;
    justify-content: space-between;
    padding: 0 2px;
}
.grip {
    width: 5px;
    height: 26px;
    border-top: 5px solid #666;
    border-bottom: 5px solid #666;
    background: linear-gradient(transparent 6px, #666 6px, #666 11px, transparent 11px);
}
.locked {
    position: relative;
}
.lock {
    position: absolute;
    top: 13px;
    left: -28px;
}
.flips {
    display: grid;
    grid-template-columns: 1fr 1fr;
    gap: 12px;
}
.flip {
    display: grid;
    place-items: center;
    border-radius: 12px;
    color: #a2a2a2;
    background: #2d2d2d;
}
.corners {
    display: grid;
    grid-template-columns: 1fr 177px;
    gap: 25px 16px;
    padding-top: 26px;
    padding-bottom: 25px;
}
.slide {
    display: flex;
    flex-direction: column;
    justify-content: space-between;
    padding-bottom: 11px;
}
.slide label {
    display: flex;
    align-items: center;
    gap: 14px;
    line-height: 36px;
}
.slide svg {
    color: #a8a8a8;
}
input[type="range"] {
    width: 100%;
    height: 28px;
}
input[type="range"]::-webkit-slider-runnable-track {
    height: 8px;
    border-radius: 4px;
    background: linear-gradient(to right, #62639a var(--fill), #454545 var(--fill));
}
input[type="range"]::-webkit-slider-thumb {
    width: 28px;
    height: 28px;
    margin-top: -10px;
    border-radius: 50%;
    background: #8b8e93;
    appearance: none;
}
.quad {
    display: grid;
    grid-template-columns: 1fr 1fr;
    gap: 8px;
}
.quad input, .offsets input {
    width: 100%;
}
.kind, .layer-style {
    position: relative;
}
.kind select, .layer-style select {
    width: 100%;
    height: 52px;
    padding: 2px 0 0 59px;
    border: 1px solid #6b6b6b;
    border-radius: 12px;
    background: #464646;
}
.quarter {
    position: absolute;
    top: 12px;
    left: 20px;
    width: 28px;
    height: 28px;
    border-top-left-radius: 16px;
    background: #e2e2e2;
}
.kind svg {
    position: absolute;
    top: 13px;
    right: 13px;
    color: #a8a8a8;
    pointer-events: none;
}
.segment {
    display: grid;
    grid-template-columns: 1fr 1fr;
    padding: 3px;
    border-radius: 12px;
    color: #a2a2a2;
    background: #2b2b2b;
}
.segment button {
    display: grid;
    place-items: center;
    border-radius: 9px;
}
.segment .on {
    color: #eee;
    background: #515151;
}
.head {
    display: flex;
    align-items: center;
    gap: 26px;
    height: 52px;
    padding-right: 7px;
}
.head .icon:last-child {
    width: 28px;
}
.end {
    justify-content: flex-end;
}
h3 {
    flex: 1;
    font-size: 26px;
    font-weight: 600;
    color: #dadada;
}
h4 {
    flex: 1;
    font-size: 28px;
    font-weight: 600;
    color: #989898;
}
.resizing {
    padding-top: 13px;
    padding-bottom: 15px;
}
.resizing .cols {
    margin-top: 13px;
}
.resize {
    color: #7b7b7b;
}
.resize svg {
    width: 100%;
    border: 1px solid #646464;
    border-radius: 12px;
    background: #464646;
}
.plain svg {
    border-color: #333;
    background: #333;
}
.resize span, .item label {
    display: block;
    margin-top: 8px;
    font-size: 23px;
    line-height: 34px;
    text-align: center;
    white-space: nowrap;
    color: #e2e2e2;
}
.appearance {
    padding-top: 13px;
    padding-bottom: 28px;
}
.appearance .head + .head {
    margin-top: 26px;
}
.layer-style {
    margin-top: 12px;
}
.layer-style select {
    height: 95px;
    padding: 4px 0 0 25px;
    font-style: italic;
}
.layer-style svg {
    position: absolute;
    top: 43px;
    right: 20px;
    color: #a8a8a8;
    pointer-events: none;
}
.actions {
    display: grid;
    grid-template-columns: repeat(4, 1fr);
    margin: 0 -6px;
    padding: 27px 0 22px;
}
.actions button {
    display: flex;
    flex-direction: column;
    align-items: center;
    gap: 15px;
    font-size: 23px;
    line-height: 34px;
}
.actions svg {
    color: #9c9c9c;
}
.actions button:disabled {
    color: #404040;
}
.actions button:disabled svg {
    color: #666;
}
.opacity {
    display: grid;
    grid-template-columns: 1fr 95px;
    gap: 14px;
    align-items: end;
    padding-top: 23px;
    border-top: 2px solid #383838;
}
.opacity .slide {
    height: 85px;
    padding-bottom: 12px;
}
.percent {
    padding-right: 13px;
}
.row {
    margin: 0 25px;
    padding: 13px 0;
    border-bottom: 2px solid #383838;
}
.paint {
    display: flex;
    align-items: flex-start;
    padding: 13px 0 2px;
}
input[type="checkbox"] {
    flex: none;
    width: 28px;
    height: 28px;
    margin: 12px 22px 0 0;
    border-radius: 7px;
    background: #62639a;
}
input[type="checkbox"]:checked::before {
    content: "";
    display: block;
    width: 11px;
    height: 19px;
    margin: 2px 0 0 9px;
    border: solid #fff;
    border-width: 0 4px 4px 0;
    transform: rotate(40deg);
}
.color {
    width: 128px;
}
.well {
    display: flex;
    align-items: center;
    justify-content: flex-end;
    width: 100%;
    height: 52px;
    padding-right: 8px;
    border: 1px solid #6b6b6b;
    border-radius: 12px;
    color: #a2a2a2;
    background:
        linear-gradient(to right, transparent 87px, #7a7a7a 87px, #484848 88px),
        conic-gradient(var(--a) 25%, var(--b) 0 50%, var(--a) 0 75%, var(--b) 0) 0 0 / 35px 35px;
}
.light {
    --a: #aaacae;
    --b: #b7b8b9;
    border-color: #909090;
}
.black {
    --a: #1d1f21;
    --b: #2b2c2e;
}
.hex {
    flex: 1;
    margin: 0 15px;
}
.hex .field {
    gap: 8px;
}
.alpha {
    width: 95px;
}
.offsets {
    display: grid;
    flex: 1;
    grid-template-columns: repeat(4, 1fr);
    gap: 17px;
    margin: 0 2px 0 15px;
}
.offsets label {
    margin-right: -4px;
    margin-left: -4px;
}
```
